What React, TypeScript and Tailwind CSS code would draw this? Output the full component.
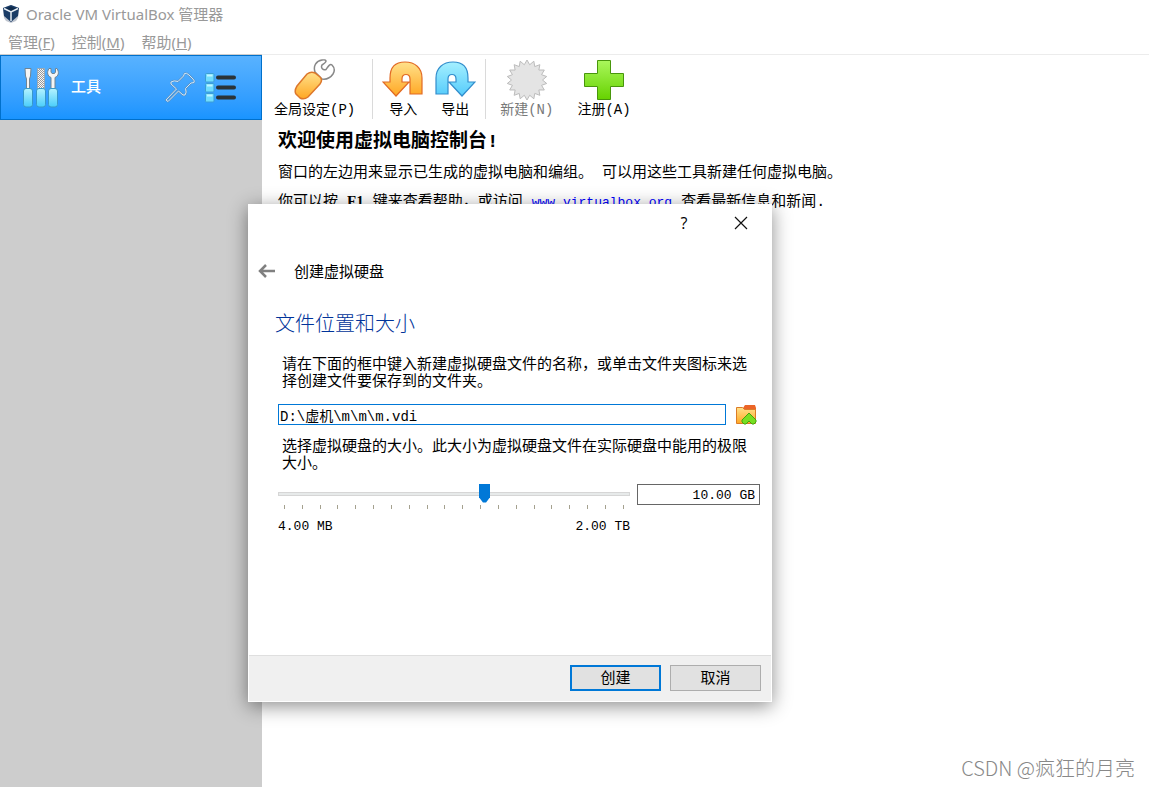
import { useState } from 'react'

const TICKS = Array.from({ length: 20 }, (_, i) => i)

function VirtualBoxLogo() {
  return (
    <svg width="18" height="20" viewBox="0 0 18 20" aria-hidden="true">
      <path d="M1 4 9 1l8 3-1 10-2 3-5 2-5-2-2-3z" fill="#bfc5cf" />
      <path d="m1 4 8-3 8 3-1 8-7 6-7-6z" fill="#1a3c66" />
      <path d="m4 4.500 5-2 5 2-5 2.500z" fill="#0f2b4c" />
      <path d="m2 4.500 7 3.500 7-3.500M9 8v9" fill="none" stroke="#e6edf4" strokeWidth="1.500" />
    </svg>
  )
}

function ToolsIcon() {
  return (
    <svg width="36" height="42" viewBox="0 0 36 42" aria-hidden="true">
      <defs>
        <linearGradient id="handle" x1="0" x2="0" y1="0" y2="1">
          <stop offset="0" stopColor="#b4f3ff" />
          <stop offset="1" stopColor="#49cdfb" />
        </linearGradient>
        <pattern id="file" width="2" height="2" patternUnits="userSpaceOnUse">
          <path d="M0 0h1v1H0zM1 1h1v1H1z" fill="#999" />
        </pattern>
      </defs>
      <path d="M2 1.500h6L7.500 9l-1 3v10h-3V12l-1-3z" fill="#f5f5f5" stroke="#6f8494" />
      <path d="M14.500 1.500h7V22h-7z" fill="#f8f8f8" stroke="#9ba8b2" />
      <path d="M15 2h6v20h-6z" fill="url(#file)" />
      <path d="M26 1.500c-2.500 4-1.500 7.500 2 9V22h4V10.500c3.500-1.500 4.500-5 2-9h-1.500V5l-1 1.500h-2.500l-1-1.500V1.500z" fill="#f5f5f5" stroke="#6f8494" />
      <rect x="0.500" y="21.500" width="9" height="18.500" rx="2.500" fill="url(#handle)" stroke="#3998c8" />
      <rect x="13.500" y="21.500" width="9" height="18.500" rx="2.500" fill="url(#handle)" stroke="#3998c8" />
      <rect x="25.500" y="21.500" width="9" height="18.500" rx="2.500" fill="url(#handle)" stroke="#3998c8" />
    </svg>
  )
}

function PinIcon() {
  const outline = 'M19.500 1.500q2-1 4.500 1.500l4 4q2 2 1 3.500l-3 .5-5.500 5.500q1.500 4-.5 6.500h-2l-4.500-4L3 29.500 1 28l10.500-11L6 12v-2q3-2 7-.5l5.500-5.500z'

  return (
    <svg width="31" height="31" viewBox="0 0 31 31" fill="none" strokeLinejoin="round" aria-hidden="true">
      <path d={outline} stroke="#5c93c4" strokeWidth="2" />
      <path d={outline} stroke="#cde6fb" />
    </svg>
  )
}

function ListIcon() {
  return (
    <svg width="31" height="30" viewBox="0 0 31 30" aria-hidden="true">
      {[0.5, 10.5, 20.5].map((y) => (
        <g key={y}>
          <rect x="0.500" y={y} width="8.500" height="8.500" rx="1" fill="#71ddfd" stroke="#3b9dd5" />
          <path d={`M2 ${y + 2}h5.500`} stroke="#c0f5ff" strokeWidth="2" />
          <path d={`M13 ${y + 4}h16`} stroke="#2b3338" strokeWidth="4" strokeLinecap="round" />
        </g>
      ))}
    </svg>
  )
}

function SettingsIcon() {
  return (
    <svg width="42" height="42" viewBox="0 0 42 42" aria-hidden="true">
      <defs>
        <linearGradient id="orange" x1="0" x2="0" y1="0" y2="1">
          <stop offset="0" stopColor="#ffe18b" />
          <stop offset="1" stopColor="#ffa723" />
        </linearGradient>
      </defs>
      <path d="M21 13c-2-6 1-11 7-12q4-.5 4 1t-4 4c-1.500 3 1 5.500 4 4.500 2.500-3.500 4-6 6-4.500q4 4 1 9-4 6-11 5z" fill="#fff" stroke="#888" strokeWidth="1.500" />
      <path d="M13 15q4-3 8-1l5 4q3 3 0 7L14 38q-4 3-8 1l-4-4q-2-3 1-8z" fill="url(#orange)" stroke="#dd772b" strokeWidth="1.500" />
    </svg>
  )
}

function ImportIcon() {
  return (
    <svg width="42" height="42" viewBox="0 0 42 42" aria-hidden="true">
      <path d="M8 23v-4C8 8 13 3 23 3s17 6 17 16v16H28V20c0-6-8-6-8 0v3h7L14 37 1 23z" fill="url(#orange)" stroke="#e26a24" strokeWidth="1.200" />
    </svg>
  )
}

function ExportIcon() {
  return (
    <svg width="42" height="42" viewBox="0 0 42 42" aria-hidden="true">
      <defs>
        <linearGradient id="blue" x1="0" x2="0" y1="0" y2="1">
          <stop offset="0" stopColor="#a5f0ff" />
          <stop offset="1" stopColor="#55cbfb" />
        </linearGradient>
      </defs>
      <path d="M34 23v-4C34 8 29 3 19 3S2 9 2 19v16h12V20c0-6 8-6 8 0v3h-7l13 14 13-14z" fill="url(#blue)" stroke="#328dcc" strokeWidth="1.200" />
    </svg>
  )
}

function NewIcon() {
  const points = Array.from({ length: 36 }, (_, i) => {
    const radius = i % 2 === 0 ? 20 : 15.5
    const angle = (i * Math.PI) / 18 - Math.PI / 2
    return `${21 + radius * Math.cos(angle)},${21 + radius * Math.sin(angle)}`
  }).join(' ')

  return (
    <svg width="42" height="42" viewBox="0 0 42 42" aria-hidden="true">
      <polygon points={points} fill="#e4e4e4" stroke="#bcbcbc" />
    </svg>
  )
}

function AddIcon() {
  return (
    <svg width="42" height="42" viewBox="0 0 42 42" aria-hidden="true">
      <defs>
        <linearGradient id="green" x1="0" x2="0" y1="0" y2="1">
          <stop offset="0" stopColor="#aaf75c" />
          <stop offset="1" stopColor="#66d200" />
        </linearGradient>
      </defs>
      <path d="M14.500 1.500h13v13h13v13h-13v13h-13v-13h-13v-13h13z" fill="url(#green)" stroke="#48960c" />
    </svg>
  )
}

function FolderIcon() {
  return (
    <svg width="21" height="21" viewBox="0 0 21 21" aria-hidden="true">
      <path d="m7 4 2-3h10l1 3v15H7z" fill="#eb6527" />
      <path d="M.5 3.500h6l2 2h11v14H.5z" fill="url(#orange)" stroke="#dc7c27" />
      <path d="m13 9 7 7v2l-2 2h-2l-3-3-3 3H8l-2-2v-2z" fill="#77df22" stroke="#43a50c" />
    </svg>
  )
}

interface ToolButtonProps {
  icon: React.ReactNode
  label: string
  disabled?: boolean
}

function ToolButton({ icon, label, disabled }: ToolButtonProps) {
  return (
    <button
      type="button"
      disabled={disabled}
      className="flex flex-col items-center text-sm leading-[18px] whitespace-nowrap text-black disabled:text-[#787878]"
    >
      {icon}
      {label}
    </button>
  )
}

function DiskDialog() {
  const [path, setPath] = useState('D:\\虚机\\m\\m\\m.vdi')
  const [size, setSize] = useState('10.00 GB')
  const [position, setPosition] = useState(59)

  return (
    <section
      role="dialog"
      aria-labelledby="wizard-title"
      className="absolute top-[204px] left-[248px] flex w-[524px] flex-col bg-white shadow-[0_4px_18px_rgba(0,0,0,0.45)]"
    >
      <div className="flex h-[38px] items-center justify-end gap-[37px] pr-[21px] font-['Open_Sans',sans-serif]">
        <button type="button" aria-label="帮助" className="w-5 text-base">?</button>
        <button type="button" aria-label="关闭" className="flex w-5 justify-center">
          <svg width="14" height="14" viewBox="0 0 14 14" stroke="#111" strokeWidth="1.200">
            <path d="m1 1 12 12M13 1 1 13" />
          </svg>
        </button>
      </div>

      <div className="flex items-start gap-[18px] px-[10px] pt-[18px]">
        <button type="button" aria-label="返回" className="py-1">
          <svg width="18" height="14" viewBox="0 0 18 14" fill="none" stroke="#808080" strokeWidth="2.500">
            <path d="M17 7H2m6-6L2 7l6 6" />
          </svg>
        </button>
        <h2 id="wizard-title" className="text-[15px] leading-7">创建虚拟硬盘</h2>
      </div>

      <div className="flex flex-col px-[30px] pt-[23px] pr-3 pb-[119px] text-[15px] leading-[17px]">
        <h3 className="-ml-[3px] text-xl leading-[30px] font-light text-[#003399]">文件位置和大小</h3>
        <label htmlFor="disk-path" className="mt-4 px-1">
          请在下面的框中键入新建虚拟硬盘文件的名称，或单击文件夹图标来选择创建文件要保存到的文件夹。
        </label>
        <div className="mt-[13px] flex items-center gap-[10px]">
          <input
            id="disk-path"
            type="text"
            autoFocus
            value={path}
            onChange={(e) => setPath(e.target.value)}
            className="h-[21px] min-w-0 flex-1 border border-[#0078d7] px-px text-sm outline-none"
          />
          <button type="button" aria-label="选择文件夹" className="pr-[3px]">
            <FolderIcon />
          </button>
        </div>
        <label htmlFor="disk-size" className="mt-[14px] px-1">
          选择虚拟硬盘的大小。此大小为虚拟硬盘文件在实际硬盘中能用的极限大小。
        </label>
        <div className="mt-[11px] flex gap-[7px]">
          <div className="flex-1">
            <input
              type="range"
              aria-label="虚拟硬盘大小"
              min={0}
              max={100}
              value={position}
              onChange={(e) => setPosition(Number(e.target.value))}
              className="block h-[19px] w-full appearance-none bg-transparent [&::-webkit-slider-runnable-track]:h-1 [&::-webkit-slider-runnable-track]:border [&::-webkit-slider-runnable-track]:border-[#d6d6d6] [&::-webkit-slider-runnable-track]:bg-[#e7eaea] [&::-webkit-slider-thumb]:-mt-[9px] [&::-webkit-slider-thumb]:h-[19px] [&::-webkit-slider-thumb]:w-[11px] [&::-webkit-slider-thumb]:appearance-none [&::-webkit-slider-thumb]:bg-[#0078d7] [&::-webkit-slider-thumb]:[clip-path:polygon(0_0,100%_0,100%_72%,64%_100%,36%_100%,0_72%)]"
            />
            <div className="mt-[2px] flex justify-between px-[6px]">
              {TICKS.map((tick) => (
                <span key={tick} className="h-1 w-px bg-[#a5a18f]" />
              ))}
            </div>
            <div className="mt-[9px] flex justify-between text-[13px]">
              <span>4.00 MB</span>
              <span>2.00 TB</span>
            </div>
          </div>
          <input
            id="disk-size"
            type="text"
            value={size}
            onChange={(e) => setSize(e.target.value)}
            className="h-[21px] w-[123px] border border-[#666] px-1 pt-[2px] text-right text-[13px] outline-none"
          />
        </div>
      </div>

      <div className="m-px flex justify-end gap-[9px] border-t border-[#dfdfdf] bg-[#f0f0f0] px-[10px] pt-[9px] pb-[10px] text-[15px]">
        <button type="button" className="h-[26px] w-[91px] border-2 border-[#0078d7] bg-[#e1e1e1] pt-[3px] leading-5">创建</button>
        <button type="button" className="h-[26px] w-[91px] border border-[#adadad] bg-[#e1e1e1] pt-[3px] leading-5">取消</button>
      </div>
    </section>
  )
}

export default function App() {
  return (
    <div className="relative flex min-h-screen flex-col bg-white font-['Liberation_Mono','Noto_Sans_CJK_SC',monospace] text-black">
      <header className="font-['Noto_Sans','Noto_Sans_CJK_SC',sans-serif] text-[15px] text-[#999]">
        <div className="flex h-[30px] items-center gap-[6px] px-[2px] pb-[2px]">
          <VirtualBoxLogo />
          <h1>Oracle VM VirtualBox 管理器</h1>
        </div>
        <nav className="flex h-6 items-center gap-[17px] px-2">
          <button type="button">管理(<u>F</u>)</button>
          <button type="button">控制(<u>M</u>)</button>
          <button type="button">帮助(<u>H</u>)</button>
        </nav>
      </header>

      <div className="flex flex-1">
        <aside className="w-[262px] shrink-0 bg-[#cdcdcd] pt-px">
          <div className="flex h-[65px] items-center border border-[#0070cb] bg-linear-to-b from-[#58b2ff] to-[#1994ff] pr-[25px] pl-[22px] text-white">
            <ToolsIcon />
            <span className="ml-3 flex-1 pt-1 text-[15px] font-medium">工具</span>
            <button type="button" aria-label="固定"><PinIcon /></button>
            <button type="button" aria-label="列表" className="ml-[9px]"><ListIcon /></button>
          </div>
        </aside>

        <main className="min-w-0 flex-1 border-t border-[#ececec]">
          <div className="flex px-3 pt-1">
            <ToolButton icon={<SettingsIcon />} label="全局设定(P)" />
            <div className="ml-[17px] flex gap-[10px] border-x border-[#dadada] px-[9px]">
              <ToolButton icon={<ImportIcon />} label="导入" />
              <ToolButton icon={<ExportIcon />} label="导出" />
            </div>
            <div className="flex gap-6 pl-[14px]">
              <ToolButton icon={<NewIcon />} label="新建(N)" disabled />
              <ToolButton icon={<AddIcon />} label="注册(A)" />
            </div>
          </div>
          <div className="px-4 pt-2 text-[15px] leading-5">
            <h2 className="text-[19px] leading-[30px] font-bold">欢迎使用虚拟电脑控制台!</h2>
            <p className="mt-[7px]">窗口的左边用来显示已生成的虚拟电脑和编组。 可以用这些工具新建任何虚拟电脑。</p>
            <p className="mt-[7px]">
              你可以按 <b className="font-['Liberation_Serif',serif]">F1</b> 键来查看帮助，或访问{' '}
              <a href="https://www.virtualbox.org" className="text-[13px] text-[#0000ff] underline">www.virtualbox.org</a>{' '}
              查看最新信息和新闻.
            </p>
          </div>
        </main>
      </div>

      <DiskDialog />

      <footer className="absolute right-[14px] bottom-[5px] font-['Noto_Sans_CJK_SC',sans-serif] text-xl leading-7 font-light text-[#888]">
        CSDN @疯狂的月亮
      </footer>
    </div>
  )
}
